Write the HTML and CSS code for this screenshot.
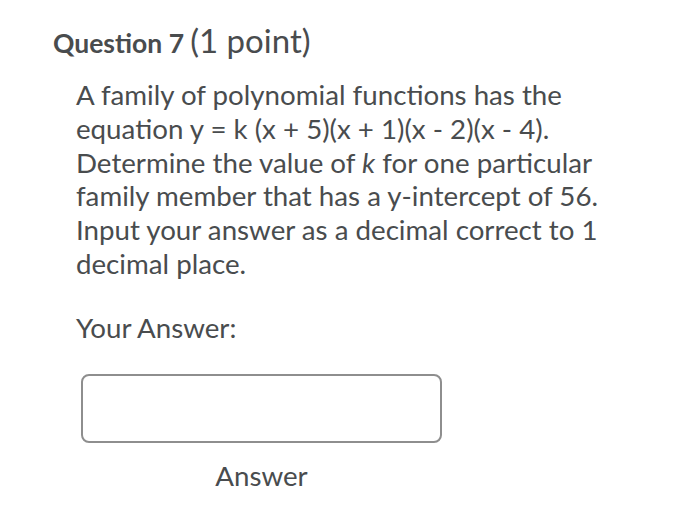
FILE: index.html
```html
<!DOCTYPE html>
<html>
<head>
<meta charset="utf-8">
<link rel="stylesheet" href="styles.css">
</head>
<body>
<div class="page">
  <h2 class="q-title"><span class="q-num">Question 7</span> <span class="q-pts">(1 point)</span></h2>
  <div class="q-body">
    <p class="q-text">A family of polynomial functions has the equation y = k (x + 5)(x + 1)(x - 2)(x - 4). Determine the value of <i>k</i> for one particular family member that has a y-intercept of 56. Input your answer as a decimal correct to 1 decimal place.</p>
    <p class="q-label">Your Answer:</p>
    <div class="answer-wrap">
      <div class="answer-box"></div>
      <div class="answer-caption">Answer</div>
    </div>
  </div>
</div>
</body>
</html>
```
FILE: styles.css
```css
html, body {
  margin: 0;
  padding: 0;
  background: #ffffff;
}
body {
  font-family: Lato, "Open Sans", sans-serif;
  color: #494c4e;
}
.page {
  padding: 22px 0 0 53px;
}
.q-title {
  margin: 0;
  font-weight: normal;
  line-height: 36px;
}
.q-num {
  font-weight: 700;
  font-size: 26.5px;
}
.q-pts {
  font-size: 33px;
}
.q-body {
  padding-left: 23px;
  margin-top: 16px;
}
.q-text {
  margin: 0;
  width: 560px;
  font-size: 27.7px;
  line-height: 33.8px;
}
.q-label {
  margin: 30px 0 0 0;
  font-size: 27.7px;
  line-height: 34px;
}
.answer-wrap {
  margin-top: 29px;
  margin-left: 5px;
  width: 361px;
}
.answer-box {
  box-sizing: border-box;
  height: 69px;
  border: 2px solid #8e8e8e;
  border-radius: 8px;
}
.answer-caption {
  text-align: center;
  font-size: 27.7px;
  line-height: 34px;
  margin-top: 16px;
}
```
